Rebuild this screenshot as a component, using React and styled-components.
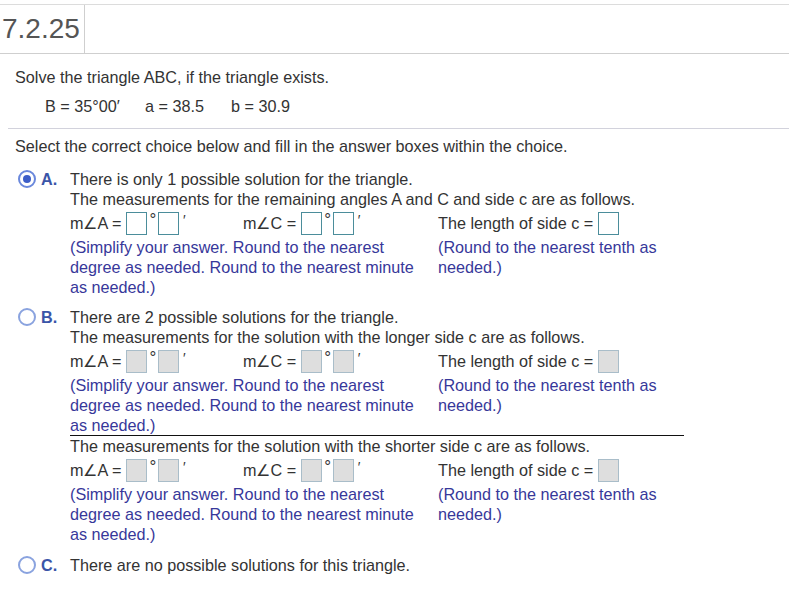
import React from 'react';
import styled, { createGlobalStyle } from 'styled-components';

const GlobalStyle = createGlobalStyle`
  body {
    margin: 0;
    background: #fff;
    font-family: "Liberation Sans", Arial, sans-serif;
    color: #333;
  }
`;

const Page = styled.div`
  width: 789px;
  height: 609px;
  overflow: hidden;
`;

const Header = styled.div`
  margin-top: 4px;
  height: 48px;
  border-top: 1px solid #dcdcdc;
  border-bottom: 1px solid #cfcfcf;
  display: flex;
`;

const Title = styled.div`
  width: 85px;
  border-right: 1px solid #cfcfcf;
  font-size: 28px;
  line-height: 48px;
  color: #555;
  padding-left: 2px;
  box-sizing: border-box;
`;

const Body = styled.div`
  padding-left: 15px;
  font-size: 16.2px;
  line-height: 20px;
`;

const Para = styled.div`
  margin-top: ${(p) => p.$top || 0}px;
`;

const Givens = styled.div`
  margin-top: 9px;
  padding-left: 30px;
  display: flex;
`;

const Given = styled.span`
  width: ${(p) => p.$w}px;
  white-space: nowrap;
`;

const Divider = styled.div`
  margin: 12px 0 0 -7px;
  border-top: 1px solid #d2d2dc;
`;

const Choice = styled.div`
  display: flex;
  margin-top: ${(p) => p.$top}px;
`;

const Radio = styled.span`
  flex: none;
  width: 18px;
  height: 18px;
  margin: 1px 0 0 3px;
  border-radius: 50%;
  box-sizing: border-box;
  border: 2px solid ${(p) => (p.$on ? '#6a88dc' : '#8aa3df')};
  display: flex;
  align-items: center;
  justify-content: center;
  &::after {
    content: '';
    display: ${(p) => (p.$on ? 'block' : 'none')};
    width: 8px;
    height: 8px;
    border-radius: 50%;
    background: #3d5ec8;
  }
`;

const Letter = styled.span`
  flex: none;
  width: 29px;
  margin-left: 5px;
  font-weight: bold;
  color: #3a55a8;
`;

const Content = styled.div`
  flex: none;
  width: 614px;
`;

const Block = styled.div`
  border-top: ${(p) => (p.$rule ? '1px solid #111' : 'none')};
`;

const AnswerGrid = styled.div`
  display: grid;
  grid-template-columns: 173px 195px 240px;
`;

const InputRow = styled.div`
  display: flex;
  align-items: center;
  height: 28px;
  white-space: nowrap;
`;

const Label = styled.span`
  margin-right: 5px;
`;

const Box = styled.span`
  display: inline-block;
  width: 21px;
  height: 23px;
  box-sizing: border-box;
  border: 1px solid ${(p) => (p.$on ? '#4b8d9b' : '#a9bdc9')};
  background: ${(p) => (p.$on ? '#fff' : '#dedede')};
`;

const Mark = styled.span`
  display: inline-block;
  width: ${(p) => p.$w}px;
  text-align: center;
  font-size: ${(p) => p.$size}px;
  align-self: flex-start;
  line-height: 16px;
  margin-top: 3px;
`;

const Hint = styled.div`
  color: #37389a;
  grid-column: ${(p) => (p.$wide ? 'span 2' : 'auto')};
  width: ${(p) => (p.$wide ? 352 : 240)}px;
`;

const AngleInput = ({ name, on }) => (
  <InputRow>
    <Label>m∠{name} =</Label>
    <Box $on={on} />
    <Mark $w={11} $size={17}>°</Mark>
    <Box $on={on} />
    <Mark $w={10} $size={14}>′</Mark>
  </InputRow>
);

const Answers = ({ on }) => (
  <AnswerGrid>
    <AngleInput name="A" on={on} />
    <AngleInput name="C" on={on} />
    <InputRow>
      <Label>The length of side c =</Label>
      <Box $on={on} />
    </InputRow>
    <Hint $wide>
      (Simplify your answer. Round to the nearest degree as needed. Round to the nearest minute as needed.)
    </Hint>
    <Hint>(Round to the nearest tenth as needed.)</Hint>
  </AnswerGrid>
);

export default function App() {
  return (
    <Page>
      <GlobalStyle />
      <Header>
        <Title>7.2.25</Title>
      </Header>
      <Body>
        <Para $top={13}>Solve the triangle ABC, if the triangle exists.</Para>
        <Givens>
          <Given $w={100}>B = 35°00′</Given>
          <Given $w={86}>a = 38.5</Given>
          <Given $w={80}>b = 30.9</Given>
        </Givens>
        <Divider />
        <Para $top={7}>Select the correct choice below and fill in the answer boxes within the choice.</Para>

        <Choice $top={13}>
          <Radio $on />
          <Letter>A.</Letter>
          <Content>
            <div>There is only 1 possible solution for the triangle.</div>
            <div>The measurements for the remaining angles A and C and side c are as follows.</div>
            <Answers on />
          </Content>
        </Choice>

        <Choice $top={10}>
          <Radio />
          <Letter>B.</Letter>
          <Content>
            <Block>
              <div>There are 2 possible solutions for the triangle.</div>
              <div>The measurements for the solution with the longer side c are as follows.</div>
              <Answers />
            </Block>
            <Block $rule>
              <div>The measurements for the solution with the shorter side c are as follows.</div>
              <Answers />
            </Block>
          </Content>
        </Choice>

        <Choice $top={11}>
          <Radio />
          <Letter>C.</Letter>
          <Content>There are no possible solutions for this triangle.</Content>
        </Choice>
      </Body>
    </Page>
  );
}
